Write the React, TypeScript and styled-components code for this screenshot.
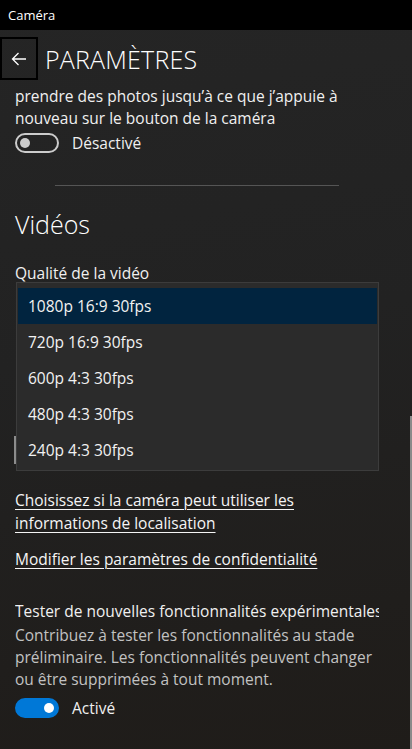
import styled, { createGlobalStyle, css } from "styled-components"

const GlobalStyle = createGlobalStyle`
    html, body {
        margin: 0;
        padding: 0;
        background: #000;
    }
    * {
        box-sizing: border-box;
    }
`

const FONT = `"Open Sans", "Noto Sans", "Liberation Sans", sans-serif`

const Window = styled.div`
    position: relative;
    width: 412px;
    height: 749px;
    overflow: hidden;
    font-family: ${FONT};
    color: #ffffff;
    background: linear-gradient(170deg, #252525 0%, #222222 45%, #1f1c19 100%);
`

const TitleBar = styled.div`
    height: 30px;
    background: #000000;
    display: flex;
    align-items: center;
    padding-left: 8px;
    font-size: 13px;
    color: #ffffff;
`

const Header = styled.div`
    display: flex;
    align-items: center;
    column-gap: 7px;
    margin-top: 7px;
    height: 43px;
`

const BackButton = styled.button`
    width: 38px;
    height: 43px;
    border: 2px solid #000000;
    background: transparent;
    display: flex;
    align-items: center;
    justify-content: center;
    padding: 0;
    color: #ffffff;
`

const PageTitle = styled.h1`
    margin: 0;
    font-size: 25px;
    font-weight: 300;
    letter-spacing: 0.2px;
`

const Content = styled.div`
    padding-left: 15px;
    width: 380px;
`

const Paragraph = styled.p<{ $muted?: boolean }>`
    margin: 0;
    font-size: 15.5px;
    line-height: 22px;
    color: ${props => props.$muted ? "#c2c2c2" : "#f0f0f0"};
`

const Intro = styled(Paragraph)`
    margin-top: 5px;
`

const ClippedLine = styled.div`
    margin-bottom: 2px;
    font-size: 15.5px;
    line-height: 22px;
    color: #f0f0f0;
    white-space: nowrap;
    overflow: hidden;
    width: 364px;
`

const ToggleRow = styled.div<{ $gap: number }>`
    display: flex;
    align-items: center;
    column-gap: 13px;
    margin-top: ${props => props.$gap}px;
    height: 20px;
    font-size: 15.5px;
    color: #f0f0f0;
`

const ToggleTrack = styled.span<{ $on?: boolean }>`
    position: relative;
    width: 44px;
    height: 20px;
    border-radius: 10px;
    flex-shrink: 0;
    border: 2px solid #cccccc;
    ${props => props.$on && css`
        border-color: #0078d7;
        background: #0078d7;
    `}
`

const ToggleKnob = styled.span<{ $on?: boolean }>`
    position: absolute;
    top: 3px;
    left: ${props => props.$on ? "27px" : "3px"};
    width: 10px;
    height: 10px;
    border-radius: 50%;
    background: ${props => props.$on ? "#ffffff" : "#cccccc"};
`

const Divider = styled.hr`
    margin: 32px 0 0 40px;
    width: 284px;
    border: none;
    border-top: 1px solid #555555;
`

const SectionTitle = styled.h2`
    margin: 22px 0 0;
    font-size: 25px;
    font-weight: 300;
    line-height: 32px;
`

const FieldLabel = styled.div`
    margin-top: 22px;
    font-size: 15.5px;
    line-height: 22px;
    color: #f0f0f0;
`

const ComboBox = styled.div`
    margin-top: 152px;
    margin-left: -1px;
    height: 28px;
    width: 200px;
    border: 2px solid #8c8c8c;
`

const Links = styled.div`
    margin-top: 25px;
    display: flex;
    flex-direction: column;
    row-gap: 13px;
`

const Link = styled.a`
    font-size: 15.5px;
    line-height: 23px;
    color: #f5f5f5;
    text-decoration: underline;
    text-underline-offset: 3px;
    text-decoration-thickness: 1px;
`

const Experimental = styled.div`
    margin-top: 29px;
`

const Dropdown = styled.ul`
    position: absolute;
    left: 16px;
    top: 282px;
    width: 363px;
    height: 189px;
    margin: 0;
    padding: 5px 1px;
    list-style: none;
    background: #2b2b2b;
    border: 1px solid #3c3c3c;
`

const DropdownItem = styled.li<{ $selected?: boolean }>`
    height: 36px;
    display: flex;
    align-items: center;
    padding-left: 10px;
    font-size: 15.5px;
    color: #f2f2f2;
    background: ${props => props.$selected ? "#01243f" : "transparent"};
`

const ScrollBar = styled.div`
    position: absolute;
    right: 0;
    top: 416px;
    bottom: 0;
    width: 2px;
    background: #8a8a8a;
`

const ArrowIcon = () => (
    <svg width="16" height="14" viewBox="0 0 16 14" fill="none">
        <path d="M15 7H1.5M7.5 1L1.5 7l6 6" stroke="#ffffff" strokeWidth="1.3" />
    </svg>
)

const qualities = [
    "1080p 16:9 30fps",
    "720p 16:9 30fps",
    "600p 4:3 30fps",
    "480p 4:3 30fps",
    "240p 4:3 30fps",
]

const Toggle = ({ on, label, gap }: { on?: boolean; label: string; gap: number }) => (
    <ToggleRow $gap={gap}>
        <ToggleTrack $on={on}>
            <ToggleKnob $on={on} />
        </ToggleTrack>
        {label}
    </ToggleRow>
)

const App = () => {
    return (
        <Window>
            <GlobalStyle />
            <TitleBar>Caméra</TitleBar>
            <Header>
                <BackButton aria-label="Retour">
                    <ArrowIcon />
                </BackButton>
                <PageTitle>PARAMÈTRES</PageTitle>
            </Header>
            <Content>
                <Intro>
                    prendre des photos jusqu’à ce que j’appuie à nouveau sur le bouton de la caméra
                </Intro>
                <Toggle gap={4} label="Désactivé" />
                <Divider />
                <SectionTitle>Vidéos</SectionTitle>
                <FieldLabel>Qualité de la vidéo</FieldLabel>
                <ComboBox />
                <Links>
                    <Link>Choisissez si la caméra peut utiliser les informations de localisation</Link>
                    <Link>Modifier les paramètres de confidentialité</Link>
                </Links>
                <Experimental>
                    <ClippedLine>Tester de nouvelles fonctionnalités expérimentales</ClippedLine>
                    <Paragraph $muted>
                        Contribuez à tester les fonctionnalités au stade préliminaire. Les fonctionnalités peuvent changer ou être supprimées à tout moment.
                    </Paragraph>
                    <Toggle on gap={8} label="Activé" />
                </Experimental>
            </Content>
            <Dropdown>
                {qualities.map((q, i) => (
                    <DropdownItem key={q} $selected={i === 0}>{q}</DropdownItem>
                ))}
            </Dropdown>
            <ScrollBar />
        </Window>
    )
}

export default App
